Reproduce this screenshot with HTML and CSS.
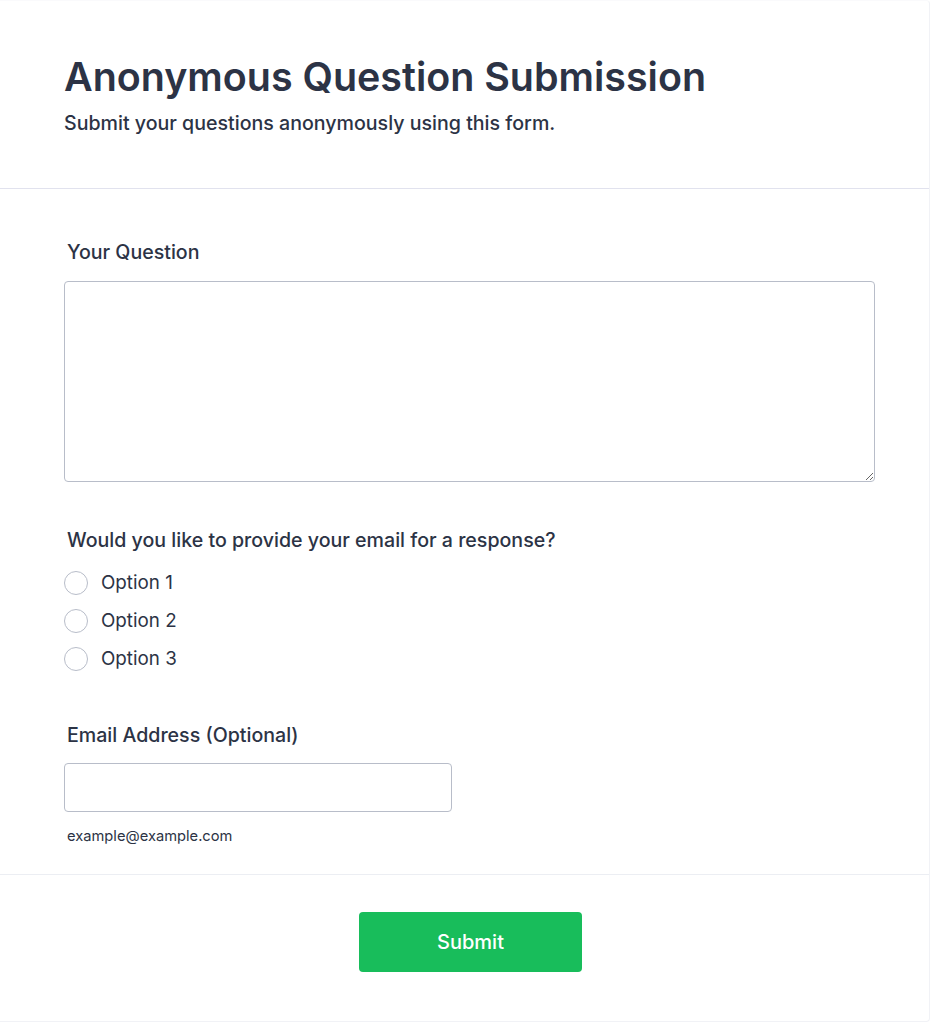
FILE: index.html
```html
<!DOCTYPE html>
<html lang="en">
<head>
<meta charset="utf-8">
<title>Anonymous Question Submission</title>
<link rel="stylesheet" href="styles.css">
</head>
<body>
<div class="card">
  <header class="form-header">
    <h1 class="title">Anonymous Question Submission</h1>
    <p class="subtitle">Submit your questions anonymously using this form.</p>
  </header>
  <main class="form-body">
    <div class="field">
      <label class="label" for="q">Your Question</label>
      <textarea id="q" class="textarea"></textarea>
    </div>
    <div class="field field-radio">
      <div class="label">Would you like to provide your email for a response?</div>
      <div class="options">
        <label class="option"><span class="radio"></span><span class="option-text">Option 1</span></label>
        <label class="option"><span class="radio"></span><span class="option-text">Option 2</span></label>
        <label class="option"><span class="radio"></span><span class="option-text">Option 3</span></label>
      </div>
    </div>
    <div class="field field-email">
      <label class="label" for="e">Email Address (Optional)</label>
      <input id="e" class="input" type="text">
      <div class="hint">example@example.com</div>
    </div>
  </main>
  <footer class="form-footer">
    <button class="submit" type="button">Submit</button>
  </footer>
</div>
</body>
</html>
```

FILE: styles.css
```css
* { box-sizing: border-box; }
html, body { margin: 0; padding: 0; background: #ffffff; }
body {
  font-family: Inter, "Noto Sans", sans-serif;
  color: #2c3345;
}
.card {
  width: 930px;
  min-height: 1022px;
  border: 1px solid #f1f2f6;
  border-left: none;
  border-top-color: #fafafc;
  border-radius: 0 4px 4px 0;
  background: #fff;
}
.form-header {
  padding: 52px 64px 0 64px;
  height: 188px;
  border-bottom: 1px solid #e1e2ee;
}
.title {
  margin: 0;
  font-size: 39.4px;
  line-height: 48px;
  font-weight: 600;
  color: #2c3345;
}
.subtitle {
  margin: 10px 0 0;
  font-size: 19.6px;
  line-height: 24px;
  font-weight: 500;
}
.form-body {
  padding: 51px 54px 28px 64px;
  border-bottom: 1px solid #eceef3;
}
.field { display: flex; flex-direction: column; }
.label {
  display: block;
  padding-left: 3px;
  font-size: 19.6px;
  line-height: 24px;
  font-weight: 500;
  color: #2c3345;
}
.textarea {
  margin-top: 17px;
  width: 811px;
  height: 201px;
  border: 1px solid #b8bdc9;
  border-radius: 4px;
  resize: vertical;
  font-family: inherit;
}
.field-radio { margin-top: 46px; }
.options {
  margin-top: 19px;
  display: flex;
  flex-direction: column;
  gap: 14px;
}
.option {
  display: flex;
  align-items: center;
  gap: 13px;
  height: 24px;
}
.radio {
  width: 24px;
  height: 24px;
  border: 1px solid #b8bdc9;
  border-radius: 50%;
  background: #fff;
  flex: none;
}
.option-text {
  font-size: 18.8px;
  line-height: 24px;
  color: #2c3345;
}
.field-email { margin-top: 52px; }
.input {
  margin-top: 16px;
  width: 388px;
  height: 49px;
  border: 1px solid #b8bdc9;
  border-radius: 4px;
  font-family: inherit;
}
.hint {
  margin-top: 14px;
  padding-left: 3px;
  font-size: 14.7px;
  line-height: 20px;
  color: #2c3345;
}
.form-footer {
  display: flex;
  justify-content: center;
  padding: 37px 0 40px 12px;
}
.submit {
  width: 223px;
  height: 60px;
  border: none;
  border-radius: 4px;
  background: #18bd5b;
  color: #fff;
  font-family: inherit;
  font-size: 20px;
  font-weight: 500;
}
```
